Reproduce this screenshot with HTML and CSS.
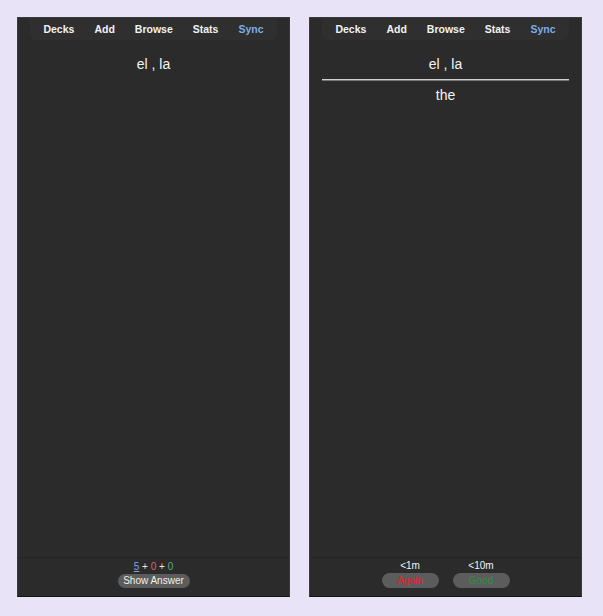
FILE: index.html
```html
<!DOCTYPE html>
<html>
<head>
<meta charset="utf-8">
<link rel="stylesheet" href="styles.css">
</head>
<body>
<div class="screens">
  <div class="panel">
    <div class="nav">
      <span class="nav-item">Decks</span>
      <span class="nav-item">Add</span>
      <span class="nav-item">Browse</span>
      <span class="nav-item">Stats</span>
      <span class="nav-item sync">Sync</span>
    </div>
    <div class="card">
      <div class="card-text">el , la</div>
    </div>
    <div class="bottom">
      <div class="counts"><span class="new">5</span> + <span class="learn">0</span> + <span class="review">0</span></div>
      <div class="btn show">Show Answer</div>
    </div>
  </div>
  <div class="panel">
    <div class="nav">
      <span class="nav-item">Decks</span>
      <span class="nav-item">Add</span>
      <span class="nav-item">Browse</span>
      <span class="nav-item">Stats</span>
      <span class="nav-item sync">Sync</span>
    </div>
    <div class="card">
      <div class="card-text">el , la</div>
      <div class="answer-line"></div>
      <div class="card-text">the</div>
    </div>
    <div class="bottom answers">
      <div class="ease">
        <div class="ease-time">&lt;1m</div>
        <div class="btn ease-btn again">Again</div>
      </div>
      <div class="ease">
        <div class="ease-time">&lt;10m</div>
        <div class="btn ease-btn good">Good</div>
      </div>
    </div>
  </div>
</div>
</body>
</html>
```
FILE: styles.css
```css
html, body {
  margin: 0;
  padding: 0;
}
body {
  background: #e9e3f8;
  font-family: "Liberation Sans", Arial, sans-serif;
  width: 603px;
  height: 616px;
  overflow: hidden;
}
.screens {
  display: flex;
  gap: 19px;
  padding: 17px 0 0 17px;
}
.panel {
  width: 273px;
  height: 580px;
  box-sizing: border-box;
  background: #2b2b2b;
  border: 1px solid #3a3a3a;
  border-bottom: 1px solid #141414;
  display: flex;
  flex-direction: column;
}
.nav {
  height: 22px;
  margin: 0 12px;
  background: #2f2f2f;
  border-radius: 0 0 6px 6px;
  display: flex;
  justify-content: center;
  align-items: center;
  gap: 20px;
}
.nav-item {
  color: #f2f2f2;
  font-weight: bold;
  font-size: 10.5px;
  line-height: 12px;
}
.nav-item.sync {
  color: #7aaee6;
}
.card {
  flex: 1;
  padding: 16px 12px 0;
  text-align: center;
}
.card-text {
  color: #f4f4f4;
  font-size: 14px;
  line-height: 16px;
}
.answer-line {
  height: 1px;
  background: #d0d0d0;
  border-bottom: 1px solid #777;
  margin: 7px 0 6px;
}
.bottom {
  height: 39px;
  border-top: 1px solid #242424;
  padding-top: 3px;
  box-sizing: border-box;
  display: flex;
  flex-direction: column;
  align-items: center;
}
.counts {
  color: #e8e8e8;
  font-size: 10px;
  line-height: 12px;
}
.new {
  color: #79a7dc;
  text-decoration: underline;
}
.learn {
  color: #d06a6a;
}
.review {
  color: #4fb46a;
}
.btn {
  background: #5c5c5c;
  border-radius: 8px;
  height: 14px;
  line-height: 14px;
  font-size: 10px;
  text-align: center;
}
.show {
  margin-top: 1px;
  width: 72px;
  color: #f0f0f0;
}
.answers {
  flex-direction: row;
  justify-content: center;
  align-items: flex-start;
  gap: 14px;
  padding-top: 2px;
}
.ease {
  display: flex;
  flex-direction: column;
  align-items: center;
}
.ease-time {
  color: #f4f4f4;
  font-size: 10px;
  line-height: 12px;
}
.ease-btn {
  margin-top: 1px;
  width: 57px;
  height: 15px;
  line-height: 15px;
}
.again {
  color: #e0242a;
}
.good {
  color: #2f8f45;
}
```
